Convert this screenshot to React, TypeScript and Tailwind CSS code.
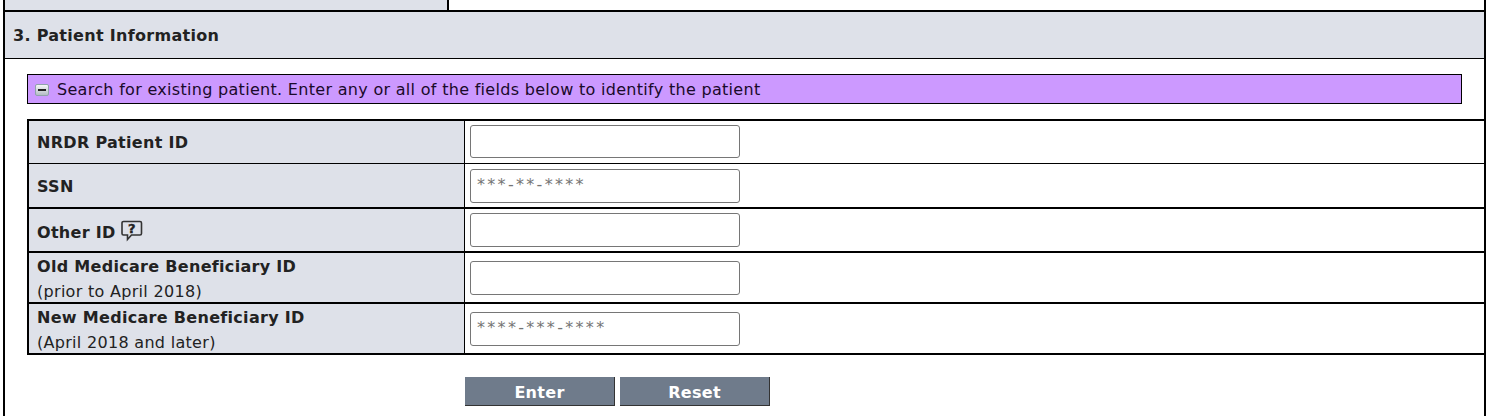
import React from "react";

function Row({ label, sub, icon, value, h, inputTop, border, labelPad, inputH }: { label: string; sub?: string; icon?: boolean; value?: string; h: string; inputTop: string; border: string; labelPad: string; inputH: string }) {
  return (
    <div className={`flex ${h} ${border} border-black`}>
      <div className={`w-[436px] shrink-0 bg-[#dee1e9] border-r border-black pl-2 flex flex-col justify-center text-[#222] text-[16px] tracking-[0.3px] ${labelPad}`}>
        <div className="font-bold leading-[25px] flex items-center">
          {label}
          {icon && (
            <svg width="22" height="22" viewBox="0 0 22 22" className="ml-[5px] -mt-[3px]" fill="none" stroke="#333" strokeWidth="1.6">
              <path d="M3 1.500h16a1.500 1.500 0 0 1 1.500 1.500v10.500a1.500 1.500 0 0 1-1.500 1.500h-8.500l-4 4.500v-4.500h-4a1.500 1.500 0 0 1-1.500-1.500v-10.500a1.500 1.500 0 0 1 1.500-1.500z" />
              <text x="11" y="13" textAnchor="middle" fontSize="13" fontWeight="700" fill="#222" stroke="#222" strokeWidth="0.4" fontFamily="'DejaVu Sans', sans-serif">?</text>
            </svg>
          )}
        </div>
        {sub && <div className="leading-[25px]">{sub}</div>}
      </div>
      <div className={`flex-1 bg-white pl-[5px] ${inputTop}`}>
        <input
          readOnly
          placeholder={value}
          className={`block w-[270px] ${inputH} border border-[#767676] rounded-[3px] px-[6px] pb-[4px] bg-white text-[16px] tracking-[2.3px] placeholder:text-[#757575] outline-none`}
        />
      </div>
    </div>
  );
}

export default function App() {
  return (
    <div className="w-[1489px] h-[416px] overflow-hidden bg-white font-['DejaVu_Sans',Verdana,sans-serif] text-[#222]">
      <div className="ml-[3px] mr-[3px] h-[416px] border-x-[2px] border-black flex flex-col">
        <div className="flex h-[12px] shrink-0 border-b-[2px] border-black">
          <div className="w-[444px] bg-[#dee1e9] border-r-[2px] border-black" />
          <div className="flex-1 bg-white" />
        </div>
        <div className="h-[47px] shrink-0 bg-[#dee1e9] border-b border-black pl-[8px] pt-[1px] flex items-center font-bold text-[16px] tracking-[0.3px] text-[#222]">
          3. Patient Information
        </div>
        <div className="mt-[15px] ml-[22px] mr-[22px] h-[30px] shrink-0 bg-[#cc99ff] border border-black flex items-center pl-[7px] pt-[1px] text-[16px] tracking-[0.3px] text-[#1a0a2a]">
          <span className="w-[14px] h-[12px] mr-[8px] rounded-[2px] border border-[#8fa3ab] bg-gradient-to-b from-[#f4f6f7] to-[#b5bdc5] flex items-center justify-center">
            <span className="block w-[8px] h-[2px] bg-[#222]" />
          </span>
          <span className="pt-[1px]">Search for existing patient. Enter any or all of the fields below to identify the patient</span>
        </div>
        <div className="mt-[15px] ml-[22px] border-l-[2px] border-t-[2px] border-black">
          <Row label="NRDR Patient ID" h="h-[43px]" inputTop="pt-[4px]" border="border-b" labelPad="" inputH="h-[33px]" />
          <Row label="SSN" value="***-**-****" h="h-[45px]" inputTop="pt-[5px]" border="border-b-[2px]" labelPad="pt-[2px]" inputH="h-[34px]" />
          <Row label="Other ID" icon h="h-[44px]" inputTop="pt-[4px]" border="border-b-[2px]" labelPad="pt-[4px]" inputH="h-[34px]" />
          <Row label="Old Medicare Beneficiary ID" sub="(prior to April 2018)" h="h-[51px]" inputTop="pt-[8px]" border="border-b-[2px]" labelPad="pt-[2px]" inputH="h-[34px]" />
          <Row label="New Medicare Beneficiary ID" sub="(April 2018 and later)" value="****-***-****" h="h-[51px]" inputTop="pt-[8px]" border="border-b-[2px]" labelPad="pt-[2px]" inputH="h-[34px]" />
        </div>
        <div className="mt-[22px] ml-[460px] flex gap-[5px]">
          <button className="w-[150px] h-[29px] pt-[4px] bg-[#6f7b8b] border-r border-b border-[#333] text-white font-bold text-[16px] tracking-[0.3px]">Enter</button>
          <button className="w-[150px] h-[29px] pt-[4px] bg-[#6f7b8b] border-r border-b border-[#333] text-white font-bold text-[16px] tracking-[0.3px]">Reset</button>
        </div>
      </div>
    </div>
  );
}
